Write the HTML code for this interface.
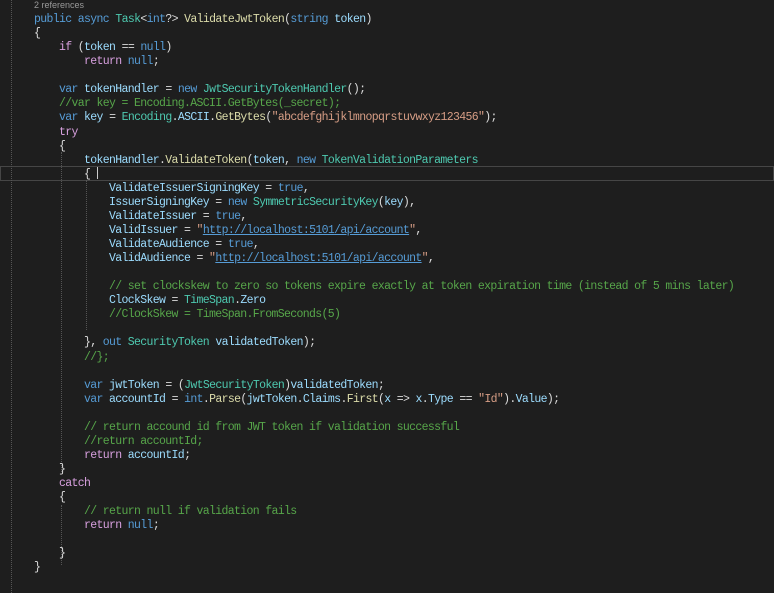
<!DOCTYPE html>
<html><head><style>
html,body{margin:0;padding:0;background:#1e1e1e;width:774px;height:593px;overflow:hidden}
.ref{position:absolute;left:34px;top:0;font:9px "Liberation Sans",sans-serif;color:#999;line-height:11px}
pre{position:absolute;left:34px;top:13px;margin:0;font:11.5px/14.07px "Liberation Mono",monospace;letter-spacing:-0.65px;color:#dcdcdc}
.k{color:#569cd6}.c{color:#d8a0df}.t{color:#4ec9b0}.m{color:#dcdcaa}.v{color:#9cdcfe}.g{color:#57a64a}.s{color:#d69d85}.u{color:#569cd6;text-decoration:underline}
.cur{position:absolute;left:0;top:166px;width:772px;height:13px;border:1px solid #464646}
.gd{position:absolute;width:0;border-left:1px dotted #555}
.caret{position:absolute;left:97px;top:167px;width:1px;height:12px;background:#ccc}
</style></head><body>
<div class="cur"></div><div class="caret"></div>
<div class="gd" style="left:11px;top:0;height:593px"></div>
<div class="gd" style="left:61px;top:152px;height:320px"></div>
<div class="gd" style="left:61px;top:505px;height:60px"></div>
<div class="gd" style="left:86px;top:180px;height:150px"></div>
<div class="ref">2 references</div>
<pre><span class="k">public</span> <span class="k">async</span> <span class="t">Task</span>&lt;<span class="k">int</span>?&gt; <span class="m">ValidateJwtToken</span>(<span class="k">string</span> <span class="v">token</span>)
{
    <span class="c">if</span> (<span class="v">token</span> == <span class="k">null</span>)
        <span class="c">return</span> <span class="k">null</span>;

    <span class="k">var</span> <span class="v">tokenHandler</span> = <span class="k">new</span> <span class="t">JwtSecurityTokenHandler</span>();
    <span class="g">//var key = Encoding.ASCII.GetBytes(_secret);</span>
    <span class="k">var</span> <span class="v">key</span> = <span class="t">Encoding</span>.<span class="v">ASCII</span>.<span class="m">GetBytes</span>(<span class="s">"abcdefghijklmnopqrstuvwxyz123456"</span>);
    <span class="c">try</span>
    {
        <span class="v">tokenHandler</span>.<span class="m">ValidateToken</span>(<span class="v">token</span>, <span class="k">new</span> <span class="t">TokenValidationParameters</span>
        {
            <span class="v">ValidateIssuerSigningKey</span> = <span class="k">true</span>,
            <span class="v">IssuerSigningKey</span> = <span class="k">new</span> <span class="t">SymmetricSecurityKey</span>(<span class="v">key</span>),
            <span class="v">ValidateIssuer</span> = <span class="k">true</span>,
            <span class="v">ValidIssuer</span> = <span class="s">"<span class="u">http://localhost:5101/api/account</span>"</span>,
            <span class="v">ValidateAudience</span> = <span class="k">true</span>,
            <span class="v">ValidAudience</span> = <span class="s">"<span class="u">http://localhost:5101/api/account</span>"</span>,

            <span class="g">// set clockskew to zero so tokens expire exactly at token expiration time (instead of 5 mins later)</span>
            <span class="v">ClockSkew</span> = <span class="t">TimeSpan</span>.<span class="v">Zero</span>
            <span class="g">//ClockSkew = TimeSpan.FromSeconds(5)</span>

        }, <span class="k">out</span> <span class="t">SecurityToken</span> <span class="v">validatedToken</span>);
        <span class="g">//};</span>

        <span class="k">var</span> <span class="v">jwtToken</span> = (<span class="t">JwtSecurityToken</span>)<span class="v">validatedToken</span>;
        <span class="k">var</span> <span class="v">accountId</span> = <span class="k">int</span>.<span class="m">Parse</span>(<span class="v">jwtToken</span>.<span class="v">Claims</span>.<span class="m">First</span>(<span class="v">x</span> =&gt; <span class="v">x</span>.<span class="v">Type</span> == <span class="s">"Id"</span>).<span class="v">Value</span>);

        <span class="g">// return accound id from JWT token if validation successful</span>
        <span class="g">//return accountId;</span>
        <span class="c">return</span> <span class="v">accountId</span>;
    }
    <span class="c">catch</span>
    {
        <span class="g">// return null if validation fails</span>
        <span class="c">return</span> <span class="k">null</span>;

    }
}</pre>
</body></html>
